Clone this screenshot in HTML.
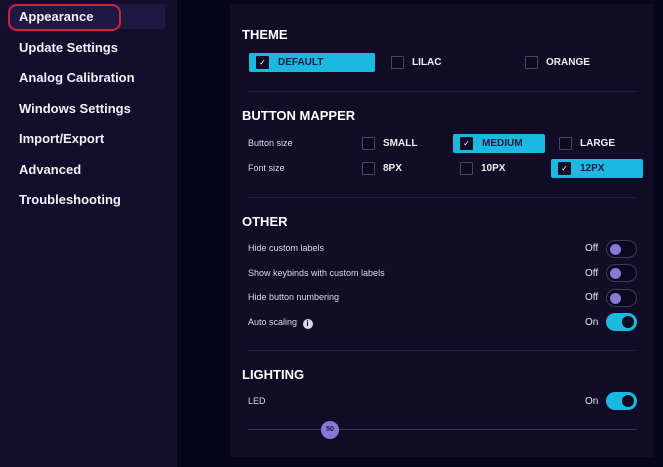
<!DOCTYPE html>
<html><head><style>
*{margin:0;padding:0;box-sizing:border-box}
body{width:663px;height:467px;background:#07051a;font-family:"Liberation Sans",sans-serif;color:#fff;position:relative;overflow:hidden}
.a{position:absolute}
#side{left:0;top:0;width:177px;height:467px;background:#120e2b}
.nav{position:absolute;left:19px;font-size:13px;font-weight:bold;color:#f2f0f8}
#panel{left:230px;top:4px;width:423px;height:453px;background:#110d26}
.h{position:absolute;left:242px;font-size:13px;font-weight:bold}
.div{position:absolute;left:248px;width:389px;height:1px;background:#221d3d}
.cb{position:absolute;width:13px;height:13px;border:1px solid #4a4566;background:#0c0920;border-radius:1px}
.opt{position:absolute;font-size:10px;font-weight:bold;color:#eee}
.sel{position:absolute;background:#1bb8e0;border-radius:2px}
.sel .cb{background:#0f0c26;border-color:#0f0c26;left:7px;top:3px;font-size:8px;color:#fff;text-align:center;line-height:11px}
.sel span{position:absolute;left:29px;top:4px;font-size:10px;font-weight:bold;color:#1a1c45}
.lab{position:absolute;left:248px;font-size:9px;color:#dcdae6}
.tg{position:absolute;left:606px;width:31px;height:18px;border-radius:9px}
.off{border:1px solid #3e3a5a;background:#0b0820}
.off::after{content:"";position:absolute;left:3px;top:3px;width:11px;height:11px;border-radius:50%;background:#8a78d6}
.on{background:#1bb8e0}
.on::after{content:"";position:absolute;right:3px;top:3px;width:12px;height:12px;border-radius:50%;background:#0d0a22}
.st{position:absolute;left:585px;font-size:10px;color:#e8e6f0}
</style></head><body>
<div id="side" class="a"></div>
<div class="a" style="left:8px;top:4px;width:157px;height:25px;background:#1e1943;border-radius:3px"></div>
<div class="a" style="left:8px;top:4px;width:113px;height:27px;border:2px solid #d0223a;border-radius:9px"></div>
<div class="nav" style="top:9px">Appearance</div>
<div class="nav" style="top:40px">Update Settings</div>
<div class="nav" style="top:70px">Analog Calibration</div>
<div class="nav" style="top:101px">Windows Settings</div>
<div class="nav" style="top:131px">Import/Export</div>
<div class="nav" style="top:162px">Advanced</div>
<div class="nav" style="top:192px">Troubleshooting</div>
<div id="panel" class="a"></div>

<div class="h" style="top:27px">THEME</div>
<div class="sel" style="left:249px;top:53px;width:126px;height:19px"><div class="cb">✓</div><span>DEFAULT</span></div>
<div class="cb" style="left:391px;top:56px"></div><div class="opt" style="left:412px;top:57px">LILAC</div>
<div class="cb" style="left:525px;top:56px"></div><div class="opt" style="left:546px;top:57px">ORANGE</div>
<div class="div" style="top:91px"></div>

<div class="h" style="top:108px">BUTTON MAPPER</div>
<div class="lab" style="top:138px">Button size</div>
<div class="cb" style="left:362px;top:137px"></div><div class="opt" style="left:383px;top:138px">SMALL</div>
<div class="sel" style="left:453px;top:134px;width:92px;height:19px"><div class="cb">✓</div><span>MEDIUM</span></div>
<div class="cb" style="left:559px;top:137px"></div><div class="opt" style="left:580px;top:138px">LARGE</div>
<div class="lab" style="top:163px">Font size</div>
<div class="cb" style="left:362px;top:162px"></div><div class="opt" style="left:383px;top:163px">8PX</div>
<div class="cb" style="left:460px;top:162px"></div><div class="opt" style="left:481px;top:163px">10PX</div>
<div class="sel" style="left:551px;top:159px;width:92px;height:19px"><div class="cb">✓</div><span>12PX</span></div>
<div class="div" style="top:197px"></div>

<div class="h" style="top:214px">OTHER</div>
<div class="lab" style="top:243px">Hide custom labels</div><div class="st" style="top:243px">Off</div><div class="tg off" style="top:240px"></div>
<div class="lab" style="top:268px">Show keybinds with custom labels</div><div class="st" style="top:268px">Off</div><div class="tg off" style="top:264px"></div>
<div class="lab" style="top:292px">Hide button numbering</div><div class="st" style="top:292px">Off</div><div class="tg off" style="top:289px"></div>
<div class="lab" style="top:317px">Auto scaling <span style="display:inline-block;width:10px;height:10px;border-radius:50%;background:#d8d6e4;color:#110d26;font-size:8px;font-weight:bold;text-align:center;line-height:10px;vertical-align:-1px;margin-left:3px">i</span></div><div class="st" style="top:317px">On</div><div class="tg on" style="top:313px"></div>
<div class="div" style="top:350px"></div>

<div class="h" style="top:367px">LIGHTING</div>
<div class="lab" style="top:396px">LED</div><div class="st" style="top:396px">On</div><div class="tg on" style="top:392px"></div>
<div class="a" style="left:248px;top:429px;width:389px;height:1px;background:#3a3558"></div>
<div class="a" style="left:321px;top:421px;width:18px;height:18px;border-radius:50%;background:#8a78d6;color:#1a1540;font-size:7px;font-weight:bold;text-align:center;line-height:18px">50</div>
</body></html>
